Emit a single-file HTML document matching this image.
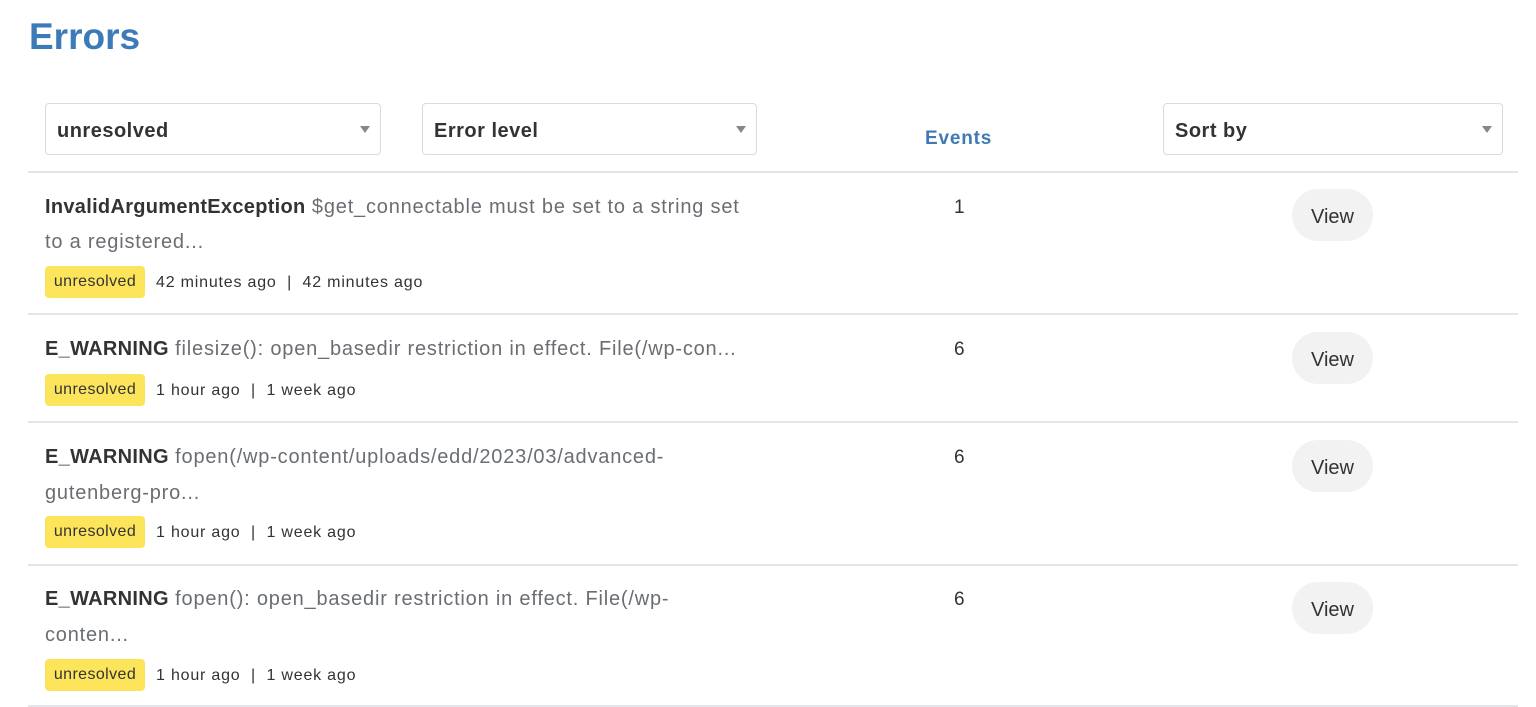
<!DOCTYPE html>
<html><head><style>
*{margin:0;padding:0;box-sizing:border-box}
body{width:1536px;height:707px;background:#fff;font-family:"Liberation Sans",sans-serif;position:relative;overflow:hidden;color:#333}
.abs{position:absolute;white-space:nowrap}
h1{position:absolute;left:29px;top:16px;font-size:37px;color:#3d7ab8;font-weight:bold;letter-spacing:0px}
.sel{position:absolute;top:103px;height:52px;border:1.5px solid #d8dbe0;border-radius:4px;font-size:20px;font-weight:bold;color:#333;padding:16px 11px 0;letter-spacing:0.5px}
.sel:after{content:"";position:absolute;right:10px;top:22px;border-left:5px solid transparent;border-right:5px solid transparent;border-top:7px solid #888}
.hr{position:absolute;left:28px;width:1490px;height:2px;background:#e3e5e8}
.t{font-size:20px;color:#6a6e73;letter-spacing:0.8px}
.t b{color:#333;letter-spacing:0.3px}
.badge{position:absolute;left:45px;height:32px;width:100px;background:#fce55b;border-radius:4px;font-size:16px;color:#333;padding:7px 0 0 0;text-align:center;letter-spacing:0.4px}
.tm{font-size:16px;color:#333;letter-spacing:0.8px}
.n{font-size:19px;color:#333;left:954px}
.v{position:absolute;left:1292px;width:81px;height:52px;border-radius:26px;background:#f2f2f2;font-size:20px;text-align:center;padding-top:17px;color:#333}
</style></head><body>
<h1>Errors</h1>
<div class="sel" style="left:45px;width:336px">unresolved</div>
<div class="sel" style="left:422px;width:335px">Error level</div>
<div class="abs" style="left:925px;top:128px;font-size:19px;font-weight:bold;color:#3f7ab5;letter-spacing:0.8px">Events</div>
<div class="sel" style="left:1163px;width:340px">Sort by</div>

<div class="hr" style="top:171px"></div>
<div class="abs t" style="left:45px;top:196px"><b>InvalidArgumentException</b> $get_connectable must be set to a string set</div>
<div class="abs t" style="left:45px;top:231px">to a registered...</div>
<div class="badge" style="top:266px">unresolved</div>
<div class="abs tm" style="left:156px;top:274px">42 minutes ago &nbsp;| &nbsp;42 minutes ago</div>
<div class="abs n" style="top:197px">1</div>
<div class="v" style="top:189px">View</div>

<div class="hr" style="top:313px"></div>
<div class="abs t" style="left:45px;top:338px"><b>E_WARNING</b> filesize(): open_basedir restriction in effect. File(/wp-con...</div>
<div class="badge" style="top:374px">unresolved</div>
<div class="abs tm" style="left:156px;top:382px">1 hour ago &nbsp;| &nbsp;1 week ago</div>
<div class="abs n" style="top:339px">6</div>
<div class="v" style="top:332px">View</div>

<div class="hr" style="top:421px"></div>
<div class="abs t" style="left:45px;top:446px"><b>E_WARNING</b> fopen(/wp-content/uploads/edd/2023/03/advanced-</div>
<div class="abs t" style="left:45px;top:482px">gutenberg-pro...</div>
<div class="badge" style="top:516px">unresolved</div>
<div class="abs tm" style="left:156px;top:524px">1 hour ago &nbsp;| &nbsp;1 week ago</div>
<div class="abs n" style="top:447px">6</div>
<div class="v" style="top:440px">View</div>

<div class="hr" style="top:564px"></div>
<div class="abs t" style="left:45px;top:588px"><b>E_WARNING</b> fopen(): open_basedir restriction in effect. File(/wp-</div>
<div class="abs t" style="left:45px;top:624px">conten...</div>
<div class="badge" style="top:659px">unresolved</div>
<div class="abs tm" style="left:156px;top:667px">1 hour ago &nbsp;| &nbsp;1 week ago</div>
<div class="abs n" style="top:589px">6</div>
<div class="v" style="top:582px">View</div>

<div class="hr" style="top:705px"></div>
</body></html>
